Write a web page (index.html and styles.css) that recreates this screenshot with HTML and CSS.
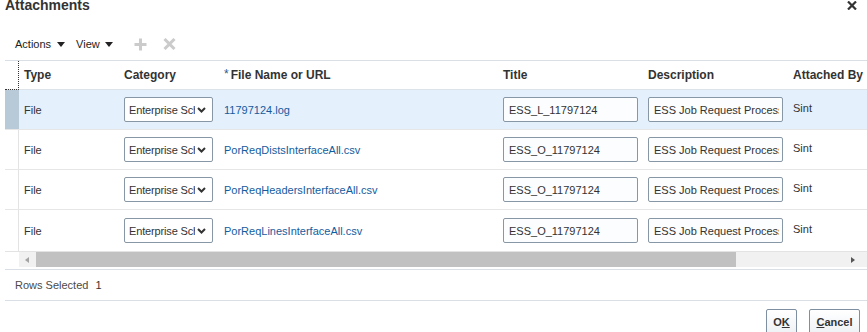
FILE: index.html
```html
<!DOCTYPE html>
<html>
<head>
<meta charset="utf-8">
<link rel="stylesheet" href="styles.css">
</head>
<body>
<div class="dialog">
  <div class="titlebar">
    <span class="title">Attachments</span>
    <svg class="close" width="10" height="9" viewBox="0 0 10 9"><path d="M1 0.5L9 8.5M9 0.5L1 8.5" stroke="#333" stroke-width="2.2" fill="none"/></svg>
  </div>
  <div class="toolbar">
    <span class="menu">Actions<svg class="tri" width="8" height="5" viewBox="0 0 8 5"><path d="M0 0H8L4 5Z" fill="#222"/></svg></span>
    <span class="menu">View<svg class="tri" width="8" height="5" viewBox="0 0 8 5"><path d="M0 0H8L4 5Z" fill="#222"/></svg></span>
    <svg class="tool plus" width="13" height="13" viewBox="0 0 13 13"><path d="M6.5 0.5V12.5M0.5 6.5H12.5" stroke="#cbcbcb" stroke-width="3" fill="none"/></svg>
    <svg class="tool del" width="13" height="12" viewBox="0 0 13 12"><path d="M1.5 1L11.5 11M11.5 1L1.5 11" stroke="#cbcbcb" stroke-width="3" fill="none"/></svg>
  </div>
  <div class="table">
    <div class="row head">
      <div class="gut focus"></div>
      <div class="cell c1">Type</div>
      <div class="cell">Category</div>
      <div class="cell"><span class="req">*</span> File Name or URL</div>
      <div class="cell">Title</div>
      <div class="cell">Description</div>
      <div class="cell">Attached By</div>
    </div>
    <div class="row sel">
      <div class="gut"></div>
      <div class="cell c1 txt">File</div>
      <div class="cell"><span class="select"><span class="opt">Enterprise Scheduler</span><svg class="chev" width="9" height="6" viewBox="0 0 9 6"><path d="M1 1L4.5 4.5L8 1" stroke="#333" stroke-width="2" fill="none"/></svg></span></div>
      <div class="cell"><a class="link">11797124.log</a></div>
      <div class="cell"><input class="inp" value="ESS_L_11797124"></div>
      <div class="cell"><input class="inp" value="ESS Job Request Processing"></div>
      <div class="cell txt by">Sint</div>
    </div>
    <div class="row">
      <div class="gut"></div>
      <div class="cell c1 txt">File</div>
      <div class="cell"><span class="select"><span class="opt">Enterprise Scheduler</span><svg class="chev" width="9" height="6" viewBox="0 0 9 6"><path d="M1 1L4.5 4.5L8 1" stroke="#333" stroke-width="2" fill="none"/></svg></span></div>
      <div class="cell"><a class="link">PorReqDistsInterfaceAll.csv</a></div>
      <div class="cell"><input class="inp" value="ESS_O_11797124"></div>
      <div class="cell"><input class="inp" value="ESS Job Request Processing"></div>
      <div class="cell txt by">Sint</div>
    </div>
    <div class="row">
      <div class="gut"></div>
      <div class="cell c1 txt">File</div>
      <div class="cell"><span class="select"><span class="opt">Enterprise Scheduler</span><svg class="chev" width="9" height="6" viewBox="0 0 9 6"><path d="M1 1L4.5 4.5L8 1" stroke="#333" stroke-width="2" fill="none"/></svg></span></div>
      <div class="cell"><a class="link">PorReqHeadersInterfaceAll.csv</a></div>
      <div class="cell"><input class="inp" value="ESS_O_11797124"></div>
      <div class="cell"><input class="inp" value="ESS Job Request Processing"></div>
      <div class="cell txt by">Sint</div>
    </div>
    <div class="row last">
      <div class="gut"></div>
      <div class="cell c1 txt">File</div>
      <div class="cell"><span class="select"><span class="opt">Enterprise Scheduler</span><svg class="chev" width="9" height="6" viewBox="0 0 9 6"><path d="M1 1L4.5 4.5L8 1" stroke="#333" stroke-width="2" fill="none"/></svg></span></div>
      <div class="cell"><a class="link">PorReqLinesInterfaceAll.csv</a></div>
      <div class="cell"><input class="inp" value="ESS_O_11797124"></div>
      <div class="cell"><input class="inp" value="ESS Job Request Processing"></div>
      <div class="cell txt by">Sint</div>
    </div>
    <div class="hscroll">
      <div class="sgut"></div>
      <div class="track">
        <span class="arrow left"><svg width="4" height="6" viewBox="0 0 4 6"><path d="M4 0V6L0 3Z" fill="#a3a3a3"/></svg></span>
        <span class="thumb"></span>
        <span class="rest"></span>
        <span class="arrow right"><svg width="4" height="6" viewBox="0 0 4 6"><path d="M0 0V6L4 3Z" fill="#555"/></svg></span>
      </div>
    </div>
  </div>
  <div class="status">Rows Selected <span class="count">1</span></div>
  <div class="buttons">
    <button class="btn ok">O<u>K</u></button>
    <button class="btn cancel"><u>C</u>ancel</button>
  </div>
</div>
</body>
</html>
```
FILE: styles.css
```css
html, body {
  margin: 0;
  padding: 0;
  background: #fff;
  overflow: hidden;
}
body {
  font-family: "Liberation Sans", Arial, sans-serif;
  color: #333;
  width: 867px;
  height: 332px;
}
.dialog {
  padding-left: 5px;
}
.titlebar {
  height: 32px;
  display: flex;
  align-items: flex-start;
  justify-content: space-between;
  padding-right: 10px;
}
.title {
  font-size: 14px;
  font-weight: bold;
  line-height: 10px;
  color: #333;
  margin-top: 0;
}
.close {
  margin-top: 1px;
}
.toolbar {
  height: 24px;
  display: flex;
  align-items: center;
  padding-left: 10px;
  font-size: 11px;
  color: #222;
}
.menu {
  display: flex;
  align-items: center;
}
.menu .tri {
  margin-left: 6px;
  margin-right: 11px;
}
.menu + .menu .tri {
  margin-left: 5px;
}
.tool.plus {
  margin-left: 10px;
}
.tool.del {
  margin-left: 16px;
}
.table {
  margin-top: 4px;
  border-top: 1px solid #d9dfe4;
}
.row {
  display: grid;
  grid-template-columns: 14px 99px 100px 279px 145px 145px 1fr;
  height: 40px;
  box-sizing: border-box;
  border-bottom: 1px solid #e6e6e6;
  font-size: 11px;
}
.row.head {
  height: 29px;
  border-bottom: 1px solid #dde3e8;
  font-size: 12px;
  font-weight: bold;
  color: #333;
}
.row.last {
  height: 41px;
  border-bottom: none;
}
.gut {
  border-right: 1px solid #e3e3e3;
}
.gut.focus {
  border-right: 1px dotted #333;
  border-bottom: 1px dotted #333;
  margin-bottom: -1px;
}
.row.sel {
  background: #e4f0fc;
}
.row.sel .gut {
  background: #b8c9d7;
  border-right-color: #b8c9d7;
}
.cell {
  display: flex;
  align-items: center;
  padding-left: 6px;
  white-space: nowrap;
  overflow: hidden;
}
.cell.c1 {
  padding-left: 5px;
}
.cell.by {
  padding-bottom: 3px;
}
.req {
  color: #2b5b8a;
  font-weight: normal;
  font-size: 12px;
  align-self: flex-start;
  margin-top: 6px;
  margin-right: 2px;
}
.txt {
  color: #333;
}
.link {
  color: #145c9e;
  text-decoration: none;
}
.select {
  width: 89px;
  height: 25px;
  box-sizing: border-box;
  border: 1px solid #8797a5;
  border-radius: 2px;
  background: #fff;
  display: flex;
  align-items: center;
  padding-left: 4px;
}
.opt {
  width: 66px;
  margin-right: 2px;
  overflow: hidden;
  white-space: nowrap;
  color: #333;
  font-size: 11px;
  letter-spacing: -0.15px;
}
.chev {
  margin-left: 0;
}
.inp {
  width: 135px;
  height: 25px;
  box-sizing: border-box;
  border: 1px solid #8797a5;
  border-radius: 2px;
  background: #fcfdfe;
  font-family: "Liberation Sans", Arial, sans-serif;
  font-size: 11px;
  color: #333;
  padding: 0 3px 0 5px;
  margin: 0;
  outline: none;
}
.hscroll {
  display: grid;
  grid-template-columns: 14px 1fr;
  border-top: 1px solid #e3e3e3;
  height: 15px;
  border-bottom: 1px solid #d9dfe4;
  padding-bottom: 2px;
}
.track {
  display: flex;
  height: 15px;
  background: #f1f1f1;
  align-items: stretch;
}
.arrow {
  display: flex;
  align-items: center;
  justify-content: center;
}
.arrow.left {
  width: 17px;
  padding-left: 6px;
  justify-content: flex-start;
  box-sizing: border-box;
}
.thumb {
  width: 700px;
  background: #c1c1c1;
}
.rest {
  flex: 1;
}
.arrow.right {
  width: 16px;
  justify-content: flex-start;
}
.status {
  height: 31px;
  box-sizing: border-box;
  border-bottom: 1px solid #d9dfe4;
  display: flex;
  align-items: center;
  padding-left: 10px;
  padding-bottom: 1px;
  font-size: 11px;
  color: #4a4a4a;
}
.count {
  margin-left: 7px;
  color: #333;
}
.buttons {
  display: flex;
  justify-content: flex-end;
  gap: 12px;
  padding-top: 8px;
  padding-right: 7px;
}
.btn {
  height: 26px;
  box-sizing: border-box;
  border: 1px solid #7d8fa0;
  border-radius: 2px;
  background: linear-gradient(#ffffff, #eef1f4);
  font-family: "Liberation Sans", Arial, sans-serif;
  font-size: 11px;
  font-weight: bold;
  color: #333;
  padding: 0;
  margin: 0;
}
.btn.ok {
  width: 31px;
}
.btn.cancel {
  width: 51px;
}
```
